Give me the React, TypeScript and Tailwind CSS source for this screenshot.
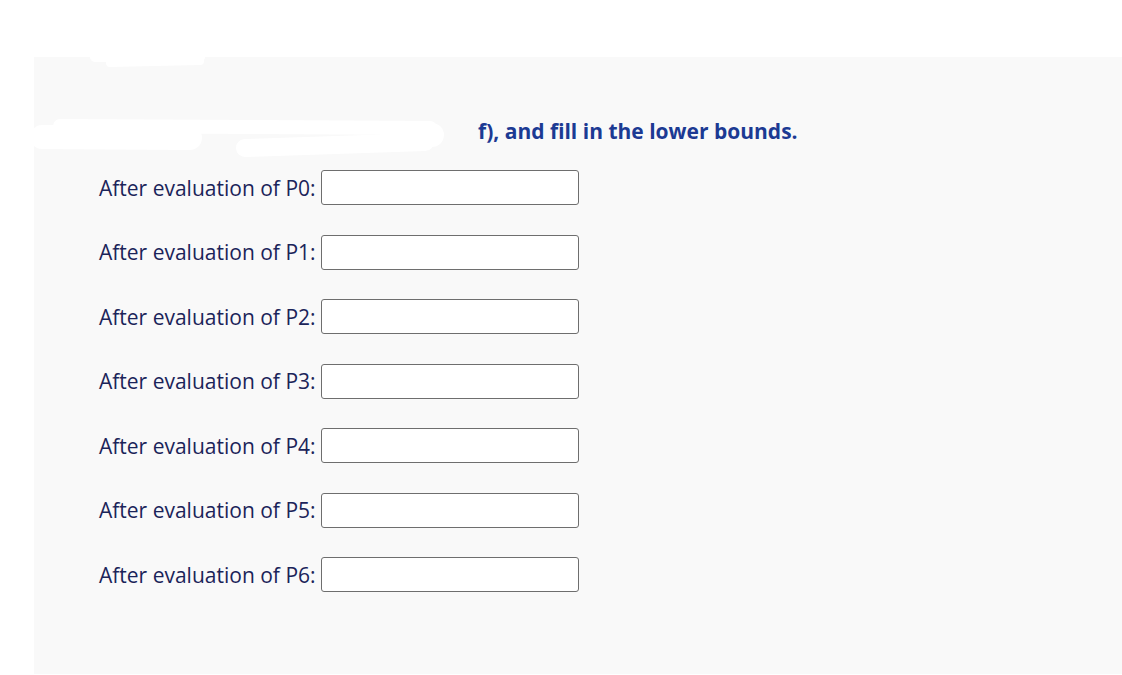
import React from "react";

const rows = ["P0", "P1", "P2", "P3", "P4", "P5", "P6"];

export default function App() {
  return (
    <div
      className="relative min-h-[675px] w-[1122px] bg-white"
      style={{ fontFamily: '"Open Sans", "Noto Sans", sans-serif' }}
    >
      <div className="h-[57px]" />
      <div className="ml-[34px] bg-[#f9f9f9] pt-[60px] pb-[82px]">
        <p className="pl-[444px] text-[21px] leading-[29px] font-bold text-[#1c3a93]">
          f), and fill in the lower bounds.
        </p>
        <div className="mt-[24px] flex flex-col gap-[29.5px] pl-[65px]">
          {rows.map((r) => (
            <div key={r} className="flex h-[35px] items-center gap-[5px]">
              <span className="pt-[1px] text-[21px] leading-[29px] text-[#1b2459]">
                After evaluation of {r}:
              </span>
              <div className="h-[35px] w-[258px] rounded-[3px] border border-[#6e6e6e] bg-white" />
            </div>
          ))}
        </div>
      </div>
      <svg
        className="pointer-events-none absolute left-0 top-0"
        width="460"
        height="170"
        viewBox="0 0 460 170"
      >
        <g stroke="#ffffff" strokeLinecap="round" fill="none">
          <path d="M95 57 L200 57" strokeWidth="10" />
          <path d="M110 63 L200 61" strokeWidth="8" />
          <path d="M42 137 L190 138" strokeWidth="24" />
          <path d="M60 126 L430 128" strokeWidth="14" />
          <path d="M245 148 L425 142" strokeWidth="18" />
        </g>
        <circle cx="432" cy="135" r="12" fill="#ffffff" />
      </svg>
    </div>
  );
}
